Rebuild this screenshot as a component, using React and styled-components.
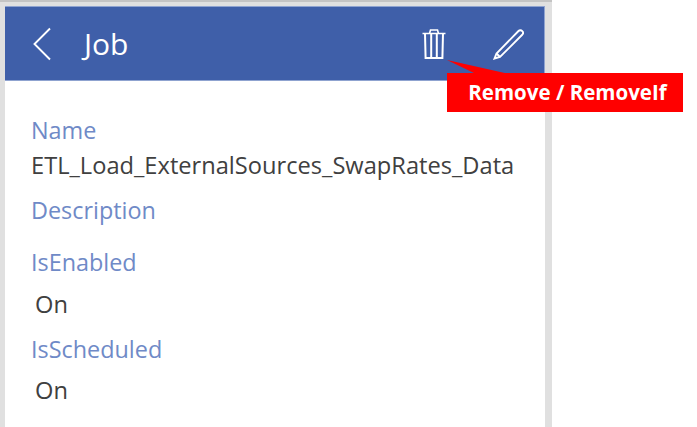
import styled, { createGlobalStyle } from "styled-components";

const GlobalStyle = createGlobalStyle`
  html, body {
    margin: 0;
    padding: 0;
    background: #fff;
    font-family: "Open Sans", "Noto Sans", sans-serif;
  }
`;

const Page = styled.div`
  position: relative;
  width: 697px;
  height: 427px;
  overflow: hidden;
`;

const Frame = styled.div`
  width: 552px;
  height: 427px;
  box-sizing: border-box;
  background: #e0e0e0;
  border-top: 2px solid #c4c4c4;
  padding: 4px 7px 0 5px;
`;

const Screen = styled.div`
  height: 100%;
  background: #fff;
`;

const Header = styled.div`
  height: 75px;
  box-sizing: border-box;
  background: #3f5fa9;
  border: 1px solid #8fa3d0;
  border-width: 1px 1px 1px 0;
  display: flex;
  align-items: center;
  padding: 0 20px 0 27px;
  color: #fff;
`;

const Title = styled.div`
  font-size: 30px;
  line-height: 38px;
  margin-left: 32px;
  flex: 1;
`;

const IconButton = styled.svg`
  display: block;
  fill: none;
  stroke: #fff;
  margin-left: ${(p) => p.$gap || 0}px;
`;

const Body = styled.div`
  padding: 34px 0 0 26px;
  display: flex;
  flex-direction: column;
`;

const Label = styled.div`
  font-size: 23.4px;
  line-height: 30px;
  color: #6f8ac7;
  margin-top: ${(p) => p.$top || 0}px;
`;

const Value = styled.div`
  font-size: 23.65px;
  line-height: 30px;
  color: #404040;
  margin-top: ${(p) => p.$top || 0}px;
  margin-left: ${(p) => (p.$indent ? 4 : 0)}px;
  white-space: nowrap;
`;

const Callout = styled.div`
  position: absolute;
  left: 447px;
  top: 73px;
  width: 236px;
  height: 39px;
  background: #ff0000;
  color: #fff;
  font-size: 20.5px;
  font-weight: 700;
  line-height: 39px;
  text-align: center;
  padding-left: 5px;
  box-sizing: border-box;
  white-space: nowrap;
`;

const CalloutTail = styled.svg`
  position: absolute;
  left: 446px;
  top: 58px;
  display: block;
`;

function App() {
  return (
    <Page>
      <GlobalStyle />
      <Frame>
        <Screen>
          <Header>
            <IconButton width="20" height="34" viewBox="0 0 20 34" strokeWidth="1.9">
              <path d="M18 1.5 L2.5 17 L18 32.5" />
            </IconButton>
            <Title>Job</Title>
            <IconButton width="24" height="32" viewBox="0 0 24 32" strokeWidth="1.6">
              <path d="M0.5 5.5 H23.5 M7.5 5.5 L8.5 2 H15.5 L16.5 5.5" />
              <path d="M3 5.5 L3.6 30 H20.4 L21 5.5" strokeWidth="2" />
              <path d="M9.2 6 V29 M14.8 6 V29" strokeWidth="2" />
            </IconButton>
            <IconButton $gap={46} width="32" height="32" viewBox="0 0 32 32" strokeWidth="1.9">
              <path d="M2.5 30.5 L4.5 25.5 L26.5 3 A2.6 2.6 0 0 1 30.2 6.8 L8 29 Z" />
              <path d="M4.5 25.5 L8 29" />
            </IconButton>
          </Header>
          <Body>
            <Label>Name</Label>
            <Value $top={5}>ETL_Load_ExternalSources_SwapRates_Data</Value>
            <Label $top={15}>Description</Label>
            <Label $top={22}>IsEnabled</Label>
            <Value $top={12} $indent>On</Value>
            <Label $top={15}>IsScheduled</Label>
            <Value $top={11} $indent>On</Value>
          </Body>
        </Screen>
      </Frame>
      <CalloutTail width="62" height="16" viewBox="0 0 62 16">
        <path d="M1 2 L61 15.5 H29 Z" fill="#ff0000" />
      </CalloutTail>
      <Callout>Remove / RemoveIf</Callout>
    </Page>
  );
}

export default App;
